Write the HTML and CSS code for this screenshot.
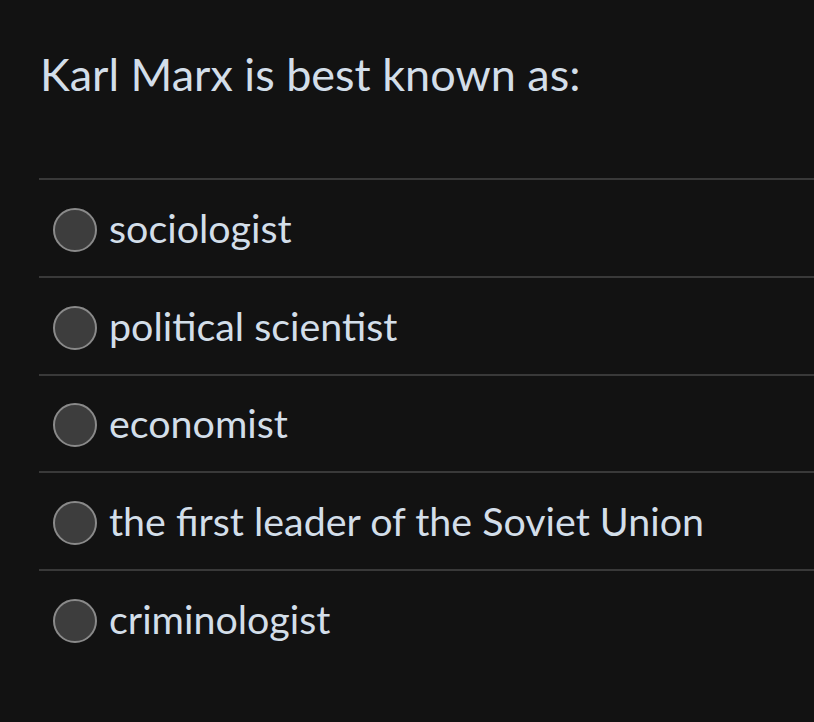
FILE: index.html
```html
<!DOCTYPE html>
<html lang="en">
<head>
    <meta charset="UTF-8">
    <title>Question</title>
    <link rel="stylesheet" href="styles.css">
</head>
<body>
    <section class="question">
        <h2 class="question_text">Karl Marx is best known as:</h2>
        <ul class="answers">
            <li class="answer">
                <span class="radio"></span>
                <span class="label">sociologist</span>
            </li>
            <li class="answer">
                <span class="radio"></span>
                <span class="label">political scientist</span>
            </li>
            <li class="answer">
                <span class="radio"></span>
                <span class="label">economist</span>
            </li>
            <li class="answer">
                <span class="radio"></span>
                <span class="label">the first leader of the Soviet Union</span>
            </li>
            <li class="answer">
                <span class="radio"></span>
                <span class="label">criminologist</span>
            </li>
        </ul>
    </section>
</body>
</html>
```

FILE: styles.css
```css
html, body {
    margin: 0;
    background: #121212;
}

body {
    font-family: Lato, "Noto Sans", sans-serif;
    color: #d3dee9;
    overflow: hidden;
}

.question {
    padding: 0 0 0 39px;
}

.question_text {
    margin: 0;
    padding: 47px 0 0 1px;
    height: 178px;
    box-sizing: border-box;
    font-size: 45px;
    font-weight: 400;
    line-height: 54px;
}

.answers {
    list-style: none;
    margin: 0;
    padding: 0;
    border-top: 2px solid #393939;
}

.answer {
    display: flex;
    align-items: center;
    gap: 12px;
    height: 95.75px;
    padding-left: 14px;
    border-bottom: 2px solid #393939;
    font-size: 39.4px;
}

.answer:last-child {
    border-bottom: none;
}

.radio {
    width: 40px;
    height: 40px;
    border-radius: 50%;
    border: 2px solid #8a8a8a;
    background: #3d3d3d;
    flex-shrink: 0;
    margin-top: 4px;
}

.label {
    line-height: 44px;
}
```
